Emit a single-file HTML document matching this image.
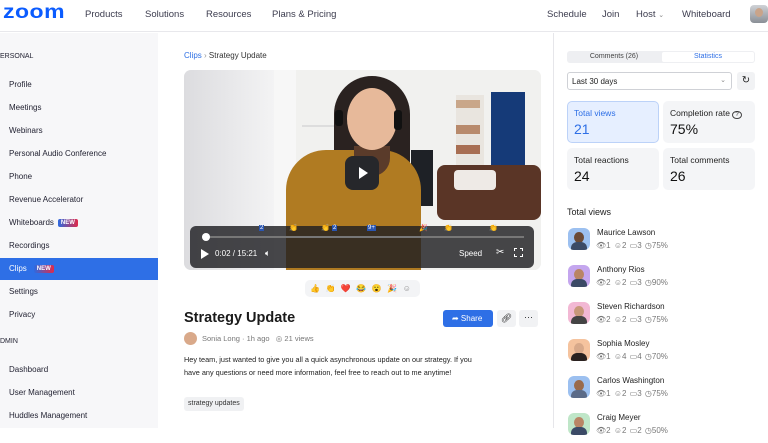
<!DOCTYPE html>
<html><head><meta charset="utf-8"><style>
*{margin:0;padding:0;box-sizing:border-box}
body{width:768px;height:428px;overflow:hidden;font-family:"Liberation Sans",sans-serif;background:#fff;position:relative;color:#222}
.a{position:absolute}
.nav{font-size:9.5px;color:#3c3c4e;top:9px}
.side{left:0;top:33px;width:158px;height:395px;background:#f7f7f9}
.si{position:absolute;left:9px;font-size:8px;color:#232333}
.sec{position:absolute;left:0;font-size:7px;color:#232333}
.new{display:inline-block;font-size:6px;font-weight:bold;color:#fff;background:linear-gradient(90deg,#2d6ae0,#e02a4a);border-radius:2px;padding:1px 3px;margin-left:4px;vertical-align:1px}
.card{position:absolute;background:#f4f5f7;border-radius:5px;width:92px;height:42px}
.card .l{position:absolute;left:7px;top:7px;font-size:8.5px;color:#222}
.card .v{position:absolute;left:7px;top:20px;font-size:14px;color:#111}
.row{position:absolute;left:567px;width:190px;height:30px}
.av{position:absolute;left:1px;top:0;width:22px;height:22px;border-radius:6px;overflow:hidden}
.av i{position:absolute;left:6px;top:4px;width:10px;height:11px;border-radius:50%;background:#b98565}
.av b{position:absolute;left:3px;top:14px;width:16px;height:10px;border-radius:6px 6px 0 0;background:#3b4a66}
.nm{position:absolute;left:30px;top:0;font-size:8px;color:#222}
.st{position:absolute;left:29px;top:13px;font-size:8px;color:#777;word-spacing:1px;white-space:nowrap}
</style></head><body>
<div class="a" style="left:0;top:0;width:768px;height:32px;border-bottom:1px solid #e8e8ec"></div>
<div class="a" style="left:3px;top:0px;font-size:23px;font-weight:bold;color:#0b5cff;letter-spacing:0.5px;transform:scaleY(0.85);transform-origin:top left">zoom</div>
<div class="a nav" style="left:85px">Products</div>
<div class="a nav" style="left:145px">Solutions</div>
<div class="a nav" style="left:206px">Resources</div>
<div class="a nav" style="left:272px">Plans &amp; Pricing</div>
<div class="a nav" style="left:547px">Schedule</div>
<div class="a nav" style="left:602px">Join</div>
<div class="a nav" style="left:636px">Host <span style="font-size:7px;color:#888">⌄</span></div>
<div class="a nav" style="left:682px">Whiteboard</div>
<div class="a" style="left:750px;top:5px;width:18px;height:18px;border-radius:4px;background:linear-gradient(#cfd2d6,#8a8f96)"><div style="position:absolute;left:5px;top:3px;width:8px;height:9px;border-radius:50%;background:#c9a48a"></div></div>
<div class="a side"></div>
<div class="sec" style="top:53px">ERSONAL</div>
<div class="si" style="top:80px">Profile</div>
<div class="si" style="top:103px">Meetings</div>
<div class="si" style="top:126px">Webinars</div>
<div class="si" style="top:149px">Personal Audio Conference</div>
<div class="si" style="top:172px">Phone</div>
<div class="si" style="top:195px">Revenue Accelerator</div>
<div class="si" style="top:218px">Whiteboards<span class="new">NEW</span></div>
<div class="si" style="top:241px">Recordings</div>
<div class="a" style="left:0;top:258px;width:158px;height:22px;background:#2e6fe6"></div>
<div class="si" style="top:264px;color:#fff">Clips<span class="new" style="margin-left:7px">NEW</span></div>
<div class="si" style="top:287px">Settings</div>
<div class="si" style="top:310px">Privacy</div>
<div class="sec" style="top:338px">DMIN</div>
<div class="si" style="top:365px">Dashboard</div>
<div class="si" style="top:388px">User Management</div>
<div class="si" style="top:411px">Huddles Management</div>
<div class="a" style="left:184px;top:51px;font-size:8px;color:#333"><span style="color:#2d6fe4">Clips</span> <span style="color:#999">›</span> Strategy Update</div>
<div class="a" style="left:184px;top:70px;width:357px;height:200px;border-radius:7px;overflow:hidden;background:#eceef0">
 <div class="a" style="left:0;top:0;width:90px;height:200px;background:linear-gradient(90deg,#dcdcdf,#f3f3f4)"></div>
 <div class="a" style="left:90px;top:0;width:22px;height:200px;background:#f7f7f7"></div>
 <div class="a" style="left:112px;top:0;width:245px;height:200px;background:#f1f1ef"></div>
 <div class="a" style="left:118px;top:55px;width:45px;height:2px;background:#ddd"></div>
 <div class="a" style="left:118px;top:120px;width:45px;height:10px;background:#e8e2da"></div>
 <div class="a" style="left:272px;top:25px;width:28px;height:80px;background:#e9e5df"></div>
 <div class="a" style="left:272px;top:30px;width:24px;height:8px;background:#c9a78a"></div>
 <div class="a" style="left:272px;top:55px;width:24px;height:9px;background:#b88a6c"></div>
 <div class="a" style="left:272px;top:75px;width:24px;height:9px;background:#a86e52"></div>
 <div class="a" style="left:307px;top:22px;width:34px;height:75px;background:#153a78"></div>
 <div class="a" style="left:227px;top:80px;width:22px;height:56px;background:#1e2126"></div>
 <div class="a" style="left:253px;top:95px;width:104px;height:55px;border-radius:8px;background:#5a3526"></div>
 <div class="a" style="left:270px;top:100px;width:42px;height:20px;border-radius:4px;background:#eeeae6"></div>
 <div class="a" style="left:150px;top:6px;width:76px;height:165px;border-radius:38px 38px 10px 10px;background:#2a2220"></div>
 <div class="a" style="left:102px;top:80px;width:135px;height:120px;border-radius:40px 40px 0 0;background:#b07b22"></div>
 <div class="a" style="left:170px;top:76px;width:36px;height:30px;border-radius:0 0 30px 30px;background:#5a3b2a"></div>
 <div class="a" style="left:163px;top:18px;width:50px;height:62px;border-radius:50%;background:#e7b99a"></div>
 <div class="a" style="left:151px;top:40px;width:8px;height:16px;border-radius:3px;background:#111"></div>
 <div class="a" style="left:210px;top:40px;width:8px;height:20px;border-radius:3px;background:#111"></div>
 <div class="a" style="left:161px;top:86px;width:34px;height:34px;border-radius:8px;background:#26272b"></div>
 <div class="a" style="left:175px;top:97px;width:0;height:0;border-left:9px solid #fff;border-top:6px solid transparent;border-bottom:6px solid transparent"></div>
 <div class="a" style="left:6px;top:156px;width:344px;height:42px;border-radius:6px;background:rgba(30,30,34,.82)"></div>
 <div class="a" style="left:18px;top:166px;width:322px;height:2px;background:#777"></div>
 <div class="a" style="left:18px;top:163px;width:8px;height:8px;border-radius:50%;background:#fff"></div>
 <div class="a" style="left:75px;top:155px;font-size:6px;color:#fff;background:#2a55b0;padding:0 1px">2</div>
 <div class="a" style="left:148px;top:155px;font-size:6px;color:#fff;background:#2a55b0;padding:0 1px">2</div>
 <div class="a" style="left:183px;top:155px;font-size:6px;color:#fff;background:#2a55b0;padding:0 1px">9+</div>
 <div class="a" style="left:105px;top:154px;font-size:7px">👏</div>
 <div class="a" style="left:137px;top:154px;font-size:7px">👏</div>
 <div class="a" style="left:235px;top:154px;font-size:7px">🎉</div>
 <div class="a" style="left:260px;top:154px;font-size:7px">👏</div>
 <div class="a" style="left:305px;top:154px;font-size:7px">👏</div>
 <div class="a" style="left:17px;top:179px;width:0;height:0;border-left:8px solid #fff;border-top:5px solid transparent;border-bottom:5px solid transparent"></div>
 <div class="a" style="left:31px;top:179px;font-size:8px;color:#fff">0:02 / 15:21</div>
 <div class="a" style="left:81px;top:178px;font-size:9px;color:#fff">🔈︎</div>
 <div class="a" style="left:275px;top:179px;font-size:8px;color:#fff">Speed</div>
 <div class="a" style="left:312px;top:177px;font-size:10px;color:#fff">✂</div>
 <div class="a" style="left:330px;top:178px;width:9px;height:9px;border:1.5px dashed #fff"></div>
</div>
<div class="a" style="left:305px;top:280px;width:115px;height:17px;border-radius:5px;background:#f3f4f6;font-size:8px;letter-spacing:5.5px;padding:4px 0 0 5px">👍👏❤️😂😮🎉<span style="color:#888">☺</span></div>
<div class="a" style="left:184px;top:310px;font-size:14.5px;font-weight:bold;color:#1a1a1a">Strategy Update</div>
<div class="a" style="left:443px;top:310px;width:50px;height:17px;border-radius:3px;background:#2e6fe6;color:#fff;font-size:8px;padding:4px 0 0 9px">➦ Share</div>
<div class="a" style="left:497px;top:310px;width:19px;height:17px;border-radius:3px;background:#f1f2f4;font-size:9px;text-align:center;line-height:17px">🔗︎</div>
<div class="a" style="left:519px;top:310px;width:19px;height:17px;border-radius:3px;background:#f1f2f4;font-size:9px;text-align:center;line-height:14px">···</div>
<div class="a" style="left:184px;top:332px;width:13px;height:13px;border-radius:50%;background:#d9a98a"></div>
<div class="a" style="left:202px;top:334px;font-size:7.5px;color:#777">Sonia Long · 1h ago &nbsp; ◎ 21 views</div>
<div class="a" style="left:184px;top:353px;width:300px;font-size:7.3px;line-height:13px;color:#222">Hey team, just wanted to give you all a quick asynchronous update on our strategy. If you have any questions or need more information, feel free to reach out to me anytime!</div>
<div class="a" style="left:184px;top:397px;height:14px;border-radius:3px;background:#f0f1f3;font-size:7px;padding:3px 4px;color:#333">strategy updates</div>
<div class="a" style="left:553px;top:33px;width:1px;height:395px;background:#e6e6ea"></div>
<div class="a" style="left:567px;top:51px;width:188px;height:12px;border-radius:3px;background:#eeeff2"></div>
<div class="a" style="left:662px;top:52px;width:92px;height:10px;border-radius:2px;background:#fff;font-size:7px;color:#2e6fe6;text-align:center;line-height:10px">Statistics</div>
<div class="a" style="left:567px;top:52px;width:94px;font-size:7px;color:#444;text-align:center;line-height:10px">Comments (26)</div>
<div class="a" style="left:567px;top:72px;width:165px;height:18px;border:1px solid #cfd1d6;border-radius:3px;font-size:8px;padding:4px 0 0 4px">Last 30 days<span style="position:absolute;right:5px;top:3px;color:#888;font-size:7px">⌄</span></div>
<div class="a" style="left:737px;top:72px;width:18px;height:18px;border-radius:3px;background:#f1f2f4;font-size:10px;text-align:center;line-height:18px">↻</div>
<div class="card" style="left:567px;top:101px;background:#e6efff;border:1px solid #bcd2f8"><div class="l" style="color:#2e6fe6;left:6px;top:6px">Total views</div><div class="v" style="color:#2e6fe6;left:6px;top:19px">21</div></div>
<div class="card" style="left:663px;top:101px"><div class="l">Completion rate <span style="border:1px solid #444;border-radius:50%;font-size:6px;padding:0 2px">?</span></div><div class="v">75%</div></div>
<div class="card" style="left:567px;top:148px"><div class="l">Total reactions</div><div class="v">24</div></div>
<div class="card" style="left:663px;top:148px"><div class="l">Total comments</div><div class="v">26</div></div>
<div class="a" style="left:567px;top:207px;font-size:9px;color:#222">Total views</div>
<div class="row" style="top:228px"><div class="av" style="background:#9cc0f0"><i style="background:#6b4a36"></i><b></b></div><div class="nm">Maurice Lawson</div><div class="st">👁︎1 ☺2 ▭3 ◷75%</div></div>
<div class="row" style="top:265px"><div class="av" style="background:#c4a6ee"><i></i><b></b></div><div class="nm">Anthony Rios</div><div class="st">👁︎2 ☺2 ▭3 ◷90%</div></div>
<div class="row" style="top:302px"><div class="av" style="background:#f2b8d4"><i style="background:#c7987a"></i><b style="background:#444"></b></div><div class="nm">Steven Richardson</div><div class="st">👁︎2 ☺2 ▭3 ◷75%</div></div>
<div class="row" style="top:339px"><div class="av" style="background:#f5c39e"><i style="background:#d8a98a"></i><b style="background:#2a2220"></b></div><div class="nm">Sophia Mosley</div><div class="st">👁︎1 ☺4 ▭4 ◷70%</div></div>
<div class="row" style="top:376px"><div class="av" style="background:#9cc0f0"><i style="background:#9a6b4c"></i><b style="background:#5b6b88"></b></div><div class="nm">Carlos Washington</div><div class="st">👁︎1 ☺2 ▭3 ◷75%</div></div>
<div class="row" style="top:413px"><div class="av" style="background:#bfe6c8"><i></i><b></b></div><div class="nm">Craig Meyer</div><div class="st">👁︎2 ☺2 ▭2 ◷50%</div></div>
</body></html>
